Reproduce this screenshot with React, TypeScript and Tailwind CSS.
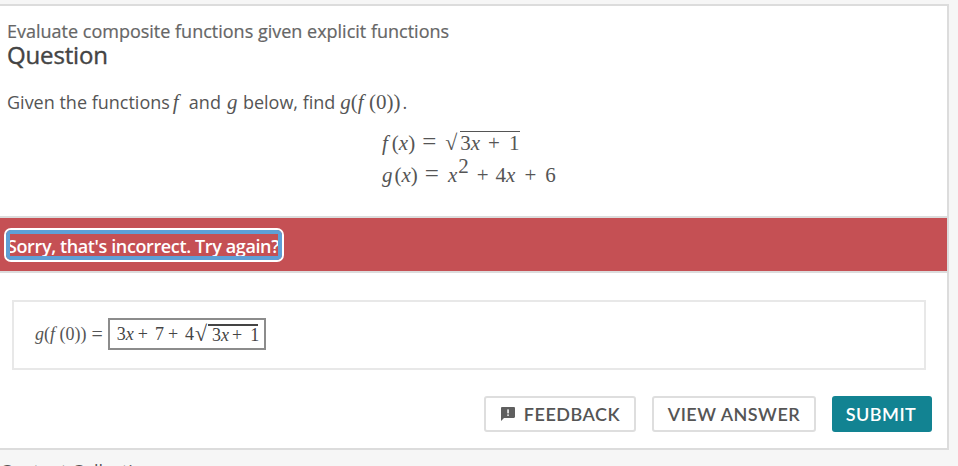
function FeedbackIcon() {
  return (
    <svg width="16" height="16" viewBox="0 0 16 16" className="shrink-0">
      <path d="M1 2.2C1 1.5 1.5 1 2.2 1h11.6c.7 0 1.2.5 1.2 1.2v8.6c0 .7-.5 1.2-1.2 1.2H4l-3 3z" fill="#5f5f5f" />
      <rect x="7.3" y="3.4" width="1.5" height="4" fill="#fff" />
      <rect x="7.3" y="8.4" width="1.5" height="1.5" fill="#fff" />
    </svg>
  )
}

export default function App() {
  return (
    <div className="h-[466px] w-[958px] overflow-hidden bg-[#f6f6f6] pt-1 font-['Open_Sans',sans-serif]">
      <div className="flex h-[446px] w-[949px] flex-col border-t-2 border-r-2 border-b-2 border-[#dcdcdc] bg-white">
        <div className="h-[210px] shrink-0 px-[7px] pt-[13px]">
          <div className="text-[18px] leading-[24px] text-[#666666] [-webkit-text-stroke:0.2px_#666666]">
            Evaluate composite functions given explicit functions
          </div>
          <h1 className="text-[24px] leading-[24px] tracking-[-0.15px] text-[#444444] [-webkit-text-stroke:0.4px_#444444]">Question</h1>
          <p className="mt-[23px] flex items-baseline text-[18px] leading-[24px] whitespace-pre text-[#555555]">
            Given the functions
            <span className="ml-[3px] w-[14px] font-['Liberation_Serif',serif] text-[21px] italic">f</span>
            <span className="ml-[2px]">and</span>
            <span className="ml-[6px] w-[12px] font-['Liberation_Serif',serif] text-[21px] italic">g</span>
            <span className="ml-[4px]">below, find</span>
            <span className="ml-[5px] font-['Liberation_Serif',serif] text-[21px]"><i>g</i>(<i>f</i> (0))</span>
            <span className="ml-[2px]">.</span>
          </p>
          <div className="mt-[13px] ml-[375px] font-['Liberation_Serif',serif] text-[21px] leading-[32px] whitespace-pre text-[#555555]">
            <div className="flex items-baseline">
              <i>f</i><span className="ml-[4px]">(<i>x</i>)</span>
              <span className="ml-[7px] text-[25px] leading-[20px]">=</span>
              <span className="ml-[9px] w-[15px] text-[22px] leading-[20px]">√</span>
              <span className="w-[60px] border-t border-[#555555] leading-[22px]">
                3<i>x</i><span className="ml-[8px]">+</span><span className="ml-[9px]">1</span>
              </span>
            </div>
            <div className="flex items-baseline">
              <i>g</i><span className="ml-[2px]">(<i>x</i>)</span>
              <span className="ml-[7px] text-[25px] leading-[20px]">=</span>
              <i className="ml-[9px]">x</i>
              <span className="ml-[1px] -translate-y-[9px]">2</span>
              <span className="ml-[8px]">+</span>
              <span className="ml-[7px]">4<i>x</i></span>
              <span className="ml-[9px]">+</span>
              <span className="ml-[9px]">6</span>
            </div>
          </div>
        </div>

        <div className="h-[57px] shrink-0 border-y-2 border-[#dcdcdc] bg-[#c55054] pt-[10px] pl-[4px]">
          <div className="inline-block rounded-[7px] border-2 border-white">
            <div className="rounded-[5px] border-4 border-[#5f9fd6]">
              <div className="h-[22px] w-[268px] overflow-hidden bg-[#c55054] pt-[1px] text-[18px] leading-[22px] font-semibold tracking-[-0.38px] whitespace-nowrap text-white">
                <span className="-ml-[3px] inline-block">Sorry, that's incorrect. Try again?</span>
              </div>
            </div>
          </div>
        </div>

        <div className="mt-[27px] ml-[12px] flex h-[70px] w-[914px] items-center border-2 border-[#e8e8e8] pb-[2px] pl-[21px] font-['Liberation_Serif',serif] text-[18px] whitespace-pre text-[#555555]">
          <span><i>g</i>(<i>f</i> (0))</span>
          <span className="ml-[5px] text-[20px]">=</span>
          <span className="ml-[5px] flex h-[32px] w-[158px] items-center border-2 border-[#8c8c8c] pl-[7px] text-[#444444]">
            3<i>x</i>
            <span className="ml-[4px]">+</span>
            <span className="ml-[7px]">7</span>
            <span className="ml-[4px]">+</span>
            <span className="ml-[7px]">4</span>
            <span className="ml-[1px] w-[13px] text-[22px] leading-[22px]">√</span>
            <span className="w-[50px] border-t-2 border-[#444444] pl-[4px] leading-[19px]">
              3<i>x</i><span className="ml-[3px]">+</span><span className="ml-[8px]">1</span>
            </span>
          </span>
        </div>

        <div className="mt-[26px] flex justify-end gap-4 pr-[15px] font-['Lato',sans-serif] text-[18px] leading-[26px] font-semibold tracking-[0.5px]">
          <button className="flex h-[36px] w-[152px] items-center justify-center gap-[8px] rounded-[3px] border-2 border-[#dedede] pb-[1px] text-[#555555]">
            <FeedbackIcon />
            FEEDBACK
          </button>
          <button className="h-[36px] w-[164px] rounded-[3px] border-2 border-[#dedede] pb-[1px] text-[#555555]">VIEW ANSWER</button>
          <button className="h-[36px] w-[100px] rounded-[3px] bg-[#128392] pr-[2px] pb-[1px] text-white">SUBMIT</button>
        </div>
      </div>
      <div className="pt-[9px] text-[18px] leading-[24px] text-[#555555]">Content Collection</div>
    </div>
  )
}
